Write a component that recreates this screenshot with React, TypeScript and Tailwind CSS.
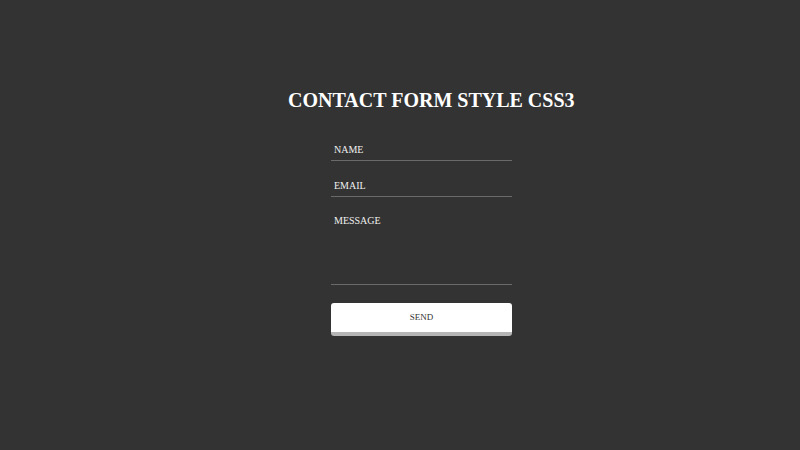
export default function App() {
  return (
    <div className="w-[800px] h-[450px] bg-[#333333] font-['Liberation_Serif',serif] text-white overflow-hidden">
      {/* Title */}
      <h1 className="pt-[88px] pl-[288px] text-[20px] leading-[24px] font-bold">
        CONTACT FORM STYLE CSS3
      </h1>

      {/* Form */}
      <form className="ml-[331px] mt-[25px] w-[181px] flex flex-col">
        <input
          type="text"
          placeholder="NAME"
          className="h-[24px] bg-transparent border-b border-[#6a6a6a] px-[3px] pt-[2px] text-[10px] text-white placeholder:text-[#f0f0f0] outline-none"
        />
        <input
          type="text"
          placeholder="EMAIL"
          className="mt-[12px] h-[24px] bg-transparent border-b border-[#6a6a6a] px-[3px] pt-[2px] text-[10px] text-white placeholder:text-[#f0f0f0] outline-none"
        />
        <textarea
          placeholder="MESSAGE"
          className="mt-[10px] h-[78px] resize-none bg-transparent border-b border-[#6a6a6a] px-[3px] pt-[6px] text-[10px] text-white placeholder:text-[#f0f0f0] outline-none"
        />
        <button
          type="button"
          className="mt-[18px] h-[33px] rounded-[3px] bg-white border-b-[4px] border-[#b5b5b5] text-[9px] text-[#333] pt-[1px]"
        >
          SEND
        </button>
      </form>
    </div>
  );
}
